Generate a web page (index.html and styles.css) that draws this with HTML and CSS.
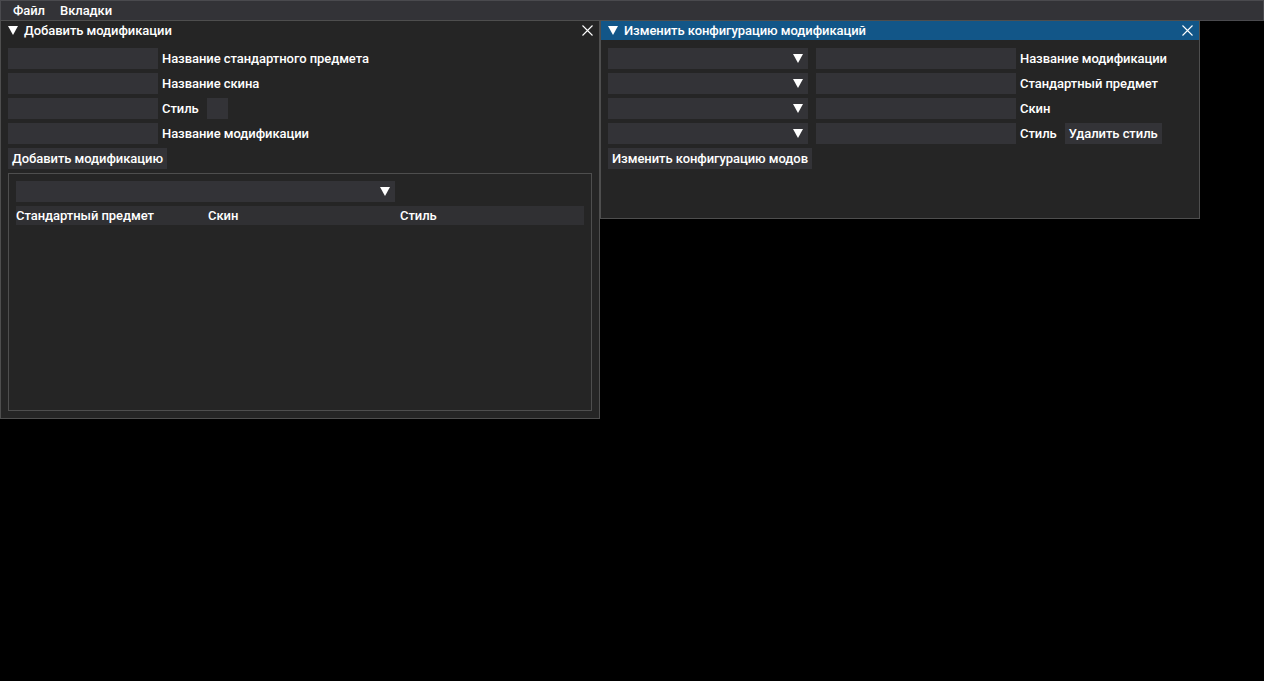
FILE: index.html
```html
<!DOCTYPE html>
<html lang="ru">
<head>
<meta charset="utf-8">
<title>Модификации</title>
<link rel="stylesheet" href="styles.css">
</head>
<body>
<div class="menubar">
  <span class="menu-item">Файл</span>
  <span class="menu-item">Вкладки</span>
</div>
<div class="desktop">
  <div class="window win-add">
    <div class="titlebar">
      <span class="tri"></span>
      <span class="title">Добавить модификации</span>
      <span class="close"><svg width="11" height="11" viewBox="0 0 11 11"><path d="M0.5 0.5 L10.5 10.5 M10.5 0.5 L0.5 10.5" stroke="#fff" stroke-width="1.1" fill="none"/></svg></span>
    </div>
    <div class="content">
      <div class="row"><span class="input w150"></span><span class="label">Название стандартного предмета</span></div>
      <div class="row"><span class="input w150"></span><span class="label">Название скина</span></div>
      <div class="row"><span class="input w150"></span><span class="label">Стиль</span><span class="check"></span></div>
      <div class="row"><span class="input w150"></span><span class="label">Название модификации</span></div>
      <div class="row"><span class="button">Добавить модификацию</span></div>
      <div class="child">
        <div class="row"><span class="combo w379"><span class="arrow"></span></span></div>
        <div class="table-head">
          <span class="col c1">Стандартный предмет</span>
          <span class="col c2">Скин</span>
          <span class="col c3">Стиль</span>
        </div>
      </div>
    </div>
  </div>
  <div class="window win-edit">
    <div class="titlebar active">
      <span class="tri"></span>
      <span class="title">Изменить конфигурацию модификаций</span>
      <span class="close"><svg width="11" height="11" viewBox="0 0 11 11"><path d="M0.5 0.5 L10.5 10.5 M10.5 0.5 L0.5 10.5" stroke="#fff" stroke-width="1.1" fill="none"/></svg></span>
    </div>
    <div class="content">
      <div class="row"><span class="combo w200"><span class="arrow"></span></span><span class="input w200 ml8"></span><span class="label">Название модификации</span></div>
      <div class="row"><span class="combo w200"><span class="arrow"></span></span><span class="input w200 ml8"></span><span class="label">Стандартный предмет</span></div>
      <div class="row"><span class="combo w200"><span class="arrow"></span></span><span class="input w200 ml8"></span><span class="label">Скин</span></div>
      <div class="row"><span class="combo w200"><span class="arrow"></span></span><span class="input w200 ml8"></span><span class="label">Стиль</span><span class="button ml8">Удалить стиль</span></div>
      <div class="row"><span class="button">Изменить конфигурацию модов</span></div>
    </div>
  </div>
</div>
</body>
</html>
```
FILE: styles.css
```css
* { box-sizing: border-box; }
html, body {
  margin: 0;
  padding: 0;
  background: #000;
  width: 1264px;
  height: 681px;
  overflow: hidden;
}
body {
  font-family: "Roboto", "Noto Sans", sans-serif;
  font-size: 13px;
  font-weight: 500;
  letter-spacing: -0.06px;
  color: #fff;
}
.menubar {
  height: 21px;
  width: 1264px;
  background: #333337;
  border: 1px solid #4a4a4e;
  display: flex;
  align-items: center;
  padding-left: 12px;
  gap: 15px;
}
.menu-item { line-height: 19px; }
.desktop {
  position: relative;
  height: 660px;
}
.window {
  position: absolute;
  background: #252525;
  border: 1px solid #4e4e4e;
  display: flex;
  flex-direction: column;
}
.win-add { left: 0; top: -1px; width: 600px; height: 399px; }
.win-edit { left: 600px; top: -1px; width: 600px; height: 199px; }
.titlebar {
  height: 19px;
  display: flex;
  align-items: center;
  padding-left: 7px;
  padding-right: 6px;
  background: #252525;
}
.titlebar.active { background: #125688; }
.tri {
  width: 0;
  height: 0;
  border-left: 5px solid transparent;
  border-right: 5px solid transparent;
  border-top: 9px solid #fff;
  margin-right: 6px;
}
.title { flex: 1; line-height: 19px; }
.close { display: flex; align-items: center; }
.content {
  padding: 8px 7px;
  display: flex;
  flex-direction: column;
  gap: 4px;
  flex: 1;
}
.row {
  display: flex;
  align-items: center;
  height: 21px;
}
.input, .combo, .check {
  height: 21px;
  background: #333337;
  display: block;
}
.w150 { width: 150px; }
.w200 { width: 200px; }
.w379 { width: 379px; }
.ml8 { margin-left: 8px; }
.label { margin-left: 4px; white-space: nowrap; }
.check { width: 21px; margin-left: 8px; }
.combo { position: relative; }
.arrow {
  position: absolute;
  right: 5px;
  top: 6px;
  width: 0;
  height: 0;
  border-left: 5px solid transparent;
  border-right: 5px solid transparent;
  border-top: 9px solid #fff;
}
.button {
  height: 21px;
  background: #333337;
  padding: 0 4px;
  line-height: 21px;
  white-space: nowrap;
}
.child {
  border: 1px solid #4e4e4e;
  width: 584px;
  height: 238px;
  padding: 7px;
  display: flex;
  flex-direction: column;
  gap: 4px;
}
.table-head {
  display: flex;
  height: 19px;
  width: 568px;
  background: #303033;
  align-items: center;
}
.col { white-space: nowrap; }
.c1, .c2 { width: 192px; }
.c3 { flex: 1; }
```
